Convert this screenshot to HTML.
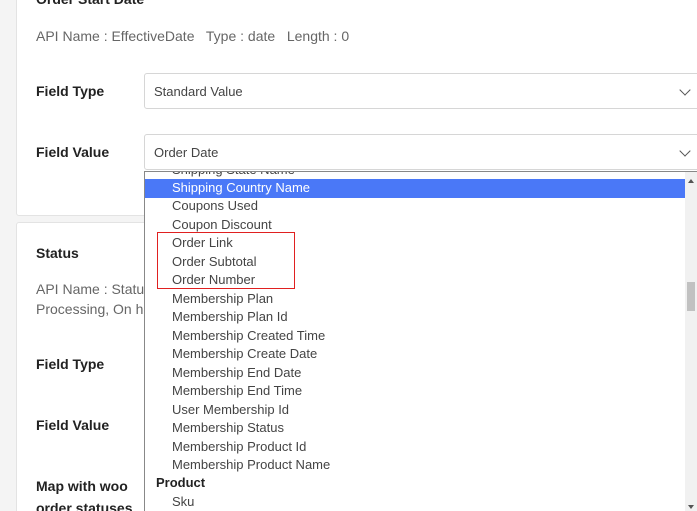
<!DOCTYPE html>
<html style="width:697px;height:511px;overflow:hidden"><head><style>
*{margin:0;padding:0;box-sizing:border-box}
body{width:697px;height:511px;overflow:hidden;background:#f4f4f4;font-family:"Liberation Sans",sans-serif;position:relative;color:#333}
.card{position:absolute;left:16px;width:700px;background:#fff;border:1px solid #e3e3e3;border-radius:3px}
.t{position:absolute;white-space:nowrap}
.lb{font-weight:bold;font-size:14px;color:#222}
.api{font-size:14px;color:#666}
.sel{position:absolute;left:144px;width:560px;height:36px;border:1px solid #d6d6d6;border-radius:3px;background:#fff;font-size:13px;color:#444;padding:10px 9px}
.chev{position:absolute;left:681px;width:8px;height:8px;border-right:1.5px solid #555;border-bottom:1.5px solid #555;transform:rotate(45deg)}
.dd{position:absolute;left:144px;top:171px;width:560px;height:340px;background:#fff;border:1px solid #888;border-bottom:0;overflow:hidden;font-size:13px;color:#444}
.it{position:absolute;left:27px;white-space:nowrap;height:18px;line-height:18px}
</style></head><body>
<div class="card" style="top:-20px;height:236px"></div>
<div class="card" style="top:222px;height:300px"></div>
<div class="t lb" style="left:36px;top:-9px;font-size:14px">Order Start Date</div>
<div class="t api" style="left:36px;top:28px">API Name : EffectiveDate &nbsp; Type : date &nbsp; Length : 0</div>
<div class="t lb" style="left:36px;top:83px">Field Type</div>
<div class="t lb" style="left:36px;top:144px">Field Value</div>
<div class="sel" style="top:73px">Standard Value</div>
<div class="chev" style="top:86px"></div>
<div class="sel" style="top:134px">Order Date</div>
<div class="chev" style="top:147px"></div>
<div class="t lb" style="left:36px;top:245px">Status</div>
<div class="t api" style="left:36px;top:281px">API Name : Status</div>
<div class="t api" style="left:36px;top:301px">Processing, On hold</div>
<div class="t lb" style="left:36px;top:356px">Field Type</div>
<div class="t lb" style="left:36px;top:417px">Field Value</div>
<div class="t lb" style="left:36px;top:478px">Map with woo</div>
<div class="t lb" style="left:36px;top:500px">order statuses</div>
<div class="dd">
<div class="it" style="top:-11px">Shipping State Name</div>
<div style="position:absolute;left:0;top:7px;width:540px;height:19px;background:#4a78f7"></div>
<div class="it" style="top:7px;color:#fff">Shipping Country Name</div>
<div class="it" style="top:25px">Coupons Used</div>
<div class="it" style="top:44px">Coupon Discount</div>
<div class="it" style="top:62px">Order Link</div>
<div class="it" style="top:81px">Order Subtotal</div>
<div class="it" style="top:99px">Order Number</div>
<div class="it" style="top:118px">Membership Plan</div>
<div class="it" style="top:136px">Membership Plan Id</div>
<div class="it" style="top:155px">Membership Created Time</div>
<div class="it" style="top:173px">Membership Create Date</div>
<div class="it" style="top:192px">Membership End Date</div>
<div class="it" style="top:210px">Membership End Time</div>
<div class="it" style="top:229px">User Membership Id</div>
<div class="it" style="top:247px">Membership Status</div>
<div class="it" style="top:266px">Membership Product Id</div>
<div class="it" style="top:284px">Membership Product Name</div>
<div class="it" style="top:302px;left:11px;font-weight:bold;color:#222">Product</div>
<div class="it" style="top:321px">Sku</div>
<div style="position:absolute;left:540px;top:0;width:13px;height:340px;background:#f1f1f1"></div>
<div style="position:absolute;left:542px;top:110px;width:8px;height:29px;background:#c1c1c1"></div>
<div style="position:absolute;left:543px;top:7px;border:3px solid transparent;border-bottom:4px solid #555;border-top:0"></div>
<div style="position:absolute;left:543px;top:333px;border:3px solid transparent;border-top:4px solid #555;border-bottom:0"></div>
</div>
<div style="position:absolute;left:157px;top:232px;width:138px;height:57px;border:1px solid #e02020"></div>
</body></html>
